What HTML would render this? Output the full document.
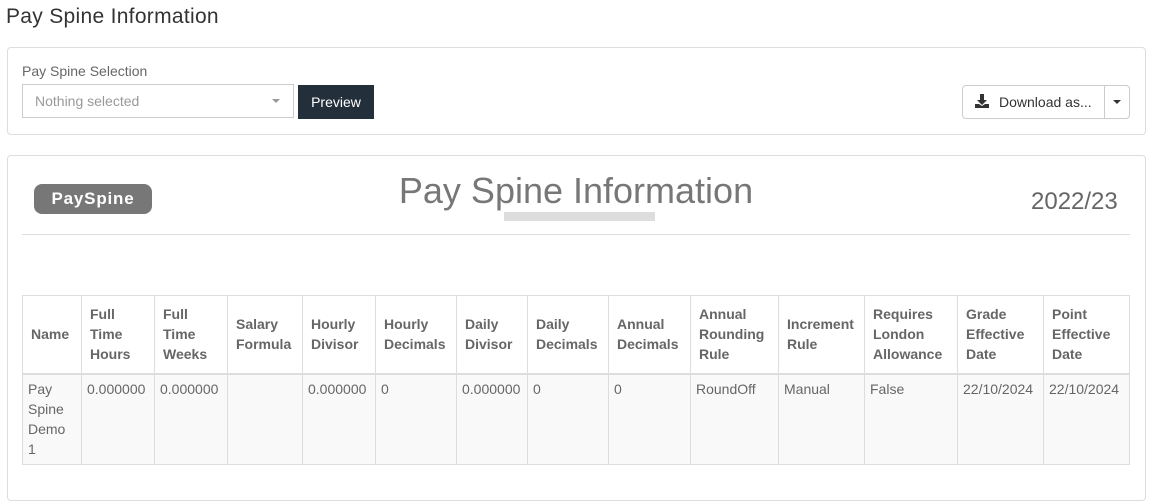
<!DOCTYPE html>
<html><head><style>
*{box-sizing:border-box;margin:0;padding:0}
body{width:1150px;height:504px;background:#fff;font-family:"Liberation Sans",sans-serif;color:#555;position:relative;overflow:hidden}
.abs{position:absolute}
.panel{position:absolute;border:1px solid #ddd;border-radius:4px;background:#fff}
table{border-collapse:collapse;position:absolute;left:22px;top:295px;font-size:14px;color:#666}
td,th{border:1px solid #ddd;text-align:left;vertical-align:top;padding:0 5px;line-height:20px}
th{height:78px;vertical-align:middle;font-weight:bold;padding:0 8px;border-bottom:2px solid #ddd}
td{height:91px;padding-top:4px;background:#f9f9f9}
</style></head><body>
<div class="abs" style="left:6px;top:5px;font-size:21px;color:#333;letter-spacing:0.3px">Pay Spine Information</div>
<div class="panel" style="left:7px;top:47px;width:1139px;height:88px"></div>
<div class="abs" style="left:22px;top:63px;font-size:14px;color:#666">Pay Spine Selection</div>
<div class="abs" style="left:22px;top:84px;width:272px;height:34px;border:1px solid #ccc;font-size:14px;color:#999;padding:8px 12px">Nothing selected</div>
<div class="abs" style="left:272px;top:99px;width:0;height:0;border-left:4px solid transparent;border-right:4px solid transparent;border-top:4px solid #999"></div>
<div class="abs" style="left:298px;top:85px;width:76px;height:34px;background:#232f3b;color:#fff;font-size:14px;text-align:center;line-height:34px">Preview</div>
<div class="abs" style="left:962px;top:85px;width:168px;height:34px;border:1px solid #ccc;border-radius:4px"></div>
<div class="abs" style="left:1104px;top:85px;width:1px;height:34px;background:#ccc"></div>
<svg class="abs" style="left:975px;top:94px" width="14" height="14" viewBox="0 0 14 14"><path d="M5 0h4v6h3l-5 5-5-5h3z" fill="#333"/><path d="M0 10h4l3 2 3-2h4v4H0z" fill="#333"/></svg>
<div class="abs" style="left:999px;top:94px;font-size:14px;color:#333">Download as...</div>
<div class="abs" style="left:1113px;top:100px;width:0;height:0;border-left:4px solid transparent;border-right:4px solid transparent;border-top:4px solid #333"></div>
<div class="panel" style="left:7px;top:155px;width:1139px;height:346px"></div>
<div class="abs" style="left:34px;top:184px;width:118px;height:30px;background:#777;border-radius:8px;color:#fff;font-weight:bold;font-size:17px;text-align:center;line-height:30px;letter-spacing:0.8px">PaySpine</div>
<div class="abs" style="left:0;width:1150px;top:170px;text-align:center;font-size:36px;color:#777;padding-left:2px">Pay Spine Information</div>
<div class="abs" style="left:504px;top:212px;width:151px;height:9px;background:#ddd"></div>
<div class="abs" style="left:1031px;top:188px;font-size:24px;color:#666">2022/23</div>
<div class="abs" style="left:22px;top:234px;width:1108px;height:1px;background:#ddd"></div>
<table>
<tr><th style="width:59px">Name</th><th style="width:73px">Full Time Hours</th><th style="width:73px">Full Time Weeks</th><th style="width:75px">Salary Formula</th><th style="width:73px">Hourly Divisor</th><th style="width:81px">Hourly Decimals</th><th style="width:71px">Daily Divisor</th><th style="width:81px">Daily Decimals</th><th style="width:82px">Annual Decimals</th><th style="width:88px">Annual Rounding Rule</th><th style="width:86px">Increment Rule</th><th style="width:93px">Requires London Allowance</th><th style="width:86px">Grade Effective Date</th><th style="width:86px">Point Effective Date</th></tr>
<tr><td>Pay Spine Demo 1</td><td>0.000000</td><td>0.000000</td><td></td><td>0.000000</td><td>0</td><td>0.000000</td><td>0</td><td>0</td><td>RoundOff</td><td>Manual</td><td>False</td><td>22/10/2024</td><td>22/10/2024</td></tr>
</table>
</body></html>
